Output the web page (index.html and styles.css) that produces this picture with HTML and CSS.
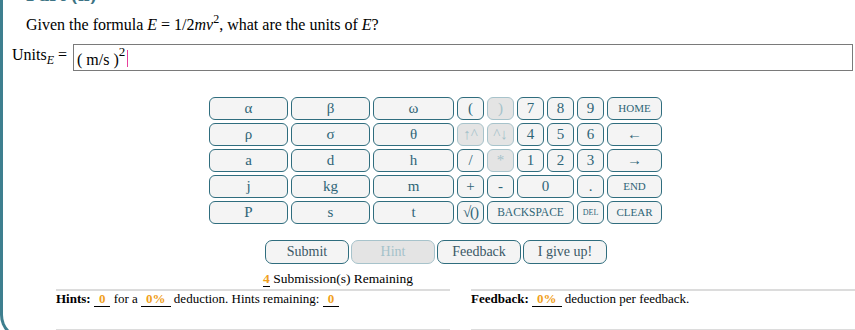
FILE: index.html
```html
<!DOCTYPE html>
<html>
<head>
<meta charset="utf-8">
<link rel="stylesheet" href="styles.css">
</head>
<body>
<div class="frame">
  <h2 class="part">Part (ii)</h2>
  <p class="question">Given the formula <i>E</i> = 1/2<i>mv</i><sup>2</sup>, what are the units of <i>E</i>?</p>
  <div class="answer">
    <span class="label">Units<sub><i>E</i></sub> =</span>
    <div class="input">( m/s )<sup>2</sup><span class="caret"></span></div>
  </div>
  <div class="keypad">
    <button class="k">α</button><button class="k">β</button><button class="k">ω</button>
    <button class="k">(</button><button class="k off">)</button><button class="k">7</button><button class="k">8</button><button class="k">9</button><button class="k sm">HOME</button>

    <button class="k">ρ</button><button class="k">σ</button><button class="k">θ</button>
    <button class="k off">↑^</button><button class="k off">^↓</button><button class="k">4</button><button class="k">5</button><button class="k">6</button><button class="k">←</button>

    <button class="k">a</button><button class="k">d</button><button class="k">h</button>
    <button class="k">/</button><button class="k off">*</button><button class="k">1</button><button class="k">2</button><button class="k">3</button><button class="k">→</button>

    <button class="k">j</button><button class="k">kg</button><button class="k">m</button>
    <button class="k">+</button><button class="k">-</button><button class="k span2">0</button><button class="k">.</button><button class="k sm">END</button>

    <button class="k">P</button><button class="k">s</button><button class="k">t</button>
    <button class="k sqrt">√()</button><button class="k sm span3">BACKSPACE</button><button class="k xs">DEL</button><button class="k sm">CLEAR</button>
  </div>
  <div class="actions">
    <button class="act">Submit</button><button class="act off">Hint</button><button class="act">Feedback</button><button class="act">I give up!</button>
  </div>
  <div class="remaining"><span class="num">4</span> Submission(s) Remaining</div>
  <div class="stats">
    <div class="cell"><b>Hints:</b> <span class="val">0</span> for a <span class="val">0%</span> deduction. Hints remaining: <span class="val">0</span></div>
    <div class="cell right"><b>Feedback:</b> <span class="val">0%</span> deduction per feedback.</div>
  </div>
</div>
</body>
</html>
```
FILE: styles.css
```css
html, body {
  margin: 0;
  padding: 0;
  overflow: hidden;
  background: #fff;
}
body {
  font-family: "Liberation Serif", "Times New Roman", serif;
  color: #000;
}
.frame {
  display: flow-root;
  border-left: 3px solid #3e7f8f;
  border-bottom: 3px solid #3e7f8f;
  border-bottom-left-radius: 25px;
  height: 340px;
  box-sizing: border-box;
}
.part {
  margin: -16px 0 0 23px;
  font-size: 21px;
  font-weight: bold;
  color: #3d7384;
  height: 20px;
  line-height: 20px;
  overflow: hidden;
}
.question {
  margin: 12px 0 0 23px;
  font-size: 16px;
  line-height: 18px;
  height: 18px;
}
sup {
  font-size: 12px;
  vertical-align: 7px;
  line-height: 0;
}
.answer {
  display: flex;
  align-items: center;
  margin-top: 10px;
  height: 27px;
}
.label {
  font-size: 16px;
  margin-left: 9px;
  width: 61px;
  position: relative;
  top: -3px;
}
.label sub {
  font-size: 12px;
  vertical-align: -4px;
  line-height: 0;
}
.input {
  flex: none;
  width: 780px;
  height: 27px;
  box-sizing: border-box;
  border: 1px solid #7a7a7a;
  font-size: 16px;
  line-height: 25px;
  padding-left: 3px;
  padding-top: 3px;
  display: flex;
  align-items: center;
}
.input sup {
  font-size: 13px;
  vertical-align: 0;
  position: relative;
  top: -7px;
}
.caret {
  display: inline-block;
  width: 1px;
  height: 17px;
  background: #e8409c;
  margin-left: 2px;
  margin-top: -2px;
}
.keypad {
  display: grid;
  grid-template-columns: 79px 79px 81px 27px 27px 27px 27px 27px 55px;
  grid-auto-rows: 23px;
  column-gap: 3px;
  row-gap: 3px;
  margin: 26px 0 0 206px;
  width: max-content;
}
.k, .act {
  font-family: "Liberation Serif", "Times New Roman", serif;
  background: #f4f4f4;
  border: 1.5px solid #2f6d7e;
  border-radius: 6px;
  color: #2f6577;
  font-size: 15px;
  padding: 0;
  margin: 0;
  line-height: 1;
  cursor: pointer;
}
.k.off, .act.off {
  background: #e4e4e4;
  border-color: #a7c3cb;
  color: #a4c2ca;
}
.k.sm { font-size: 11px; }
.k.xs { font-size: 8px; }
.k.span2 { grid-column: span 2; }
.k.span3 { grid-column: span 3; font-size: 11.5px; }
.k.sqrt { font-size: 15px; letter-spacing: -1px; }
.actions {
  display: flex;
  gap: 2px;
  margin: 16px 0 0 262px;
}
.act {
  width: 84px;
  height: 24px;
  font-size: 14px;
  color: #3a5866;
  border-radius: 7px;
}
.remaining {
  margin: 7px 0 0 260px;
  font-size: 13.5px;
  line-height: 16px;
  height: 16px;
}
.num {
  color: #f0a020;
  font-weight: bold;
  border-bottom: 1px solid #000;
}
.stats {
  display: flex;
  margin-top: 2px;
  margin-left: 53px;
  gap: 21px;
}
.cell {
  border-top: 2px solid #dcdcdc;
  border-bottom: 2px solid #dcdcdc;
  height: 37px;
  font-size: 13px;
  line-height: 14px;
  padding-top: 1px;
  box-sizing: content-box;
  width: 394px;
}
.cell.right {
  width: auto;
  flex: 1;
}
.val {
  color: #f0a020;
  font-weight: bold;
  border-bottom: 1px solid #000;
  padding: 0 5px;
}
```
